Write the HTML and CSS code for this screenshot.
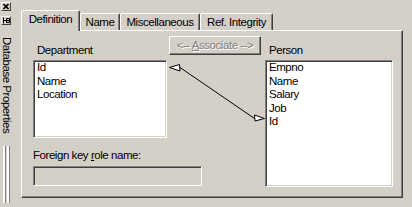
FILE: index.html
```html
<!DOCTYPE html>
<html>
<head>
<meta charset="utf-8">
<link rel="stylesheet" href="styles.css">
</head>
<body>
<div class="app">
  <aside class="side">
    <span class="cap-btn">
      <svg width="8" height="7" viewBox="0 0 8 7"><path d="M1.5 1 L6.5 6 M6.5 1 L1.5 6" stroke="#000" stroke-width="1.7" fill="none"/></svg>
    </span>
    <span class="cap-btn">
      <svg width="8" height="7" viewBox="0 0 8 7"><path d="M1.5 0.5 V6.5 M1.5 3.5 H4 M4.5 1.5 H7.5 V5.5 H4.5 Z M4.5 3.5 H7.5" stroke="#000" stroke-width="1" fill="none"/></svg>
    </span>
    <div class="side-title">Database Properties</div>
    <div class="grip"><span></span><span></span></div>
  </aside>
  <main class="main">
    <div class="tabs">
      <div class="tab active w-def">Definition</div>
      <div class="tab w-name">Name</div>
      <div class="tab w-misc">Miscellaneous</div>
      <div class="tab w-ref">Ref. Integrity</div>
    </div>
    <div class="panel">
      <div class="grid">
        <div class="lbl">Department</div>
        <div class="assoc"><button class="btn" disabled>&lt;-- <u>A</u>ssociate --&gt;</button></div>
        <div class="lbl">Person</div>
        <ul class="list dept-list">
          <li>Id</li>
          <li>Name</li>
          <li>Location</li>
        </ul>
        <ul class="list person-list">
          <li>Empno</li>
          <li>Name</li>
          <li>Salary</li>
          <li>Job</li>
          <li>Id</li>
        </ul>
        <div class="fk">
          <div class="fk-lbl">Foreign key <u>r</u>ole name:</div>
          <div class="field"></div>
        </div>
      </div>
      <svg class="link" width="382" height="168" viewBox="0 0 382 168">
        <line x1="159" y1="37.5" x2="233.5" y2="88.5" stroke="#000" stroke-width="1"/>
        <polygon points="148.5,37.5 158.5,34.5 159,41" fill="#fff" stroke="#000" stroke-width="1"/>
        <polygon points="243.5,88.5 233.5,85 234,91" fill="#fff" stroke="#000" stroke-width="1"/>
      </svg>
    </div>
  </main>
</div>
</body>
</html>
```

FILE: styles.css
```css
* { box-sizing: border-box; }
html, body {
  margin: 0;
  padding: 0;
  background: #d4d0c8;
  font-family: "Liberation Sans", Arial, sans-serif;
  font-size: 11.5px;
  letter-spacing: -0.45px;
  line-height: 13px;
  color: #000;
}
.app {
  display: flex;
  width: 412px;
  height: 207px;
  overflow: hidden;
}
.side {
  width: 21px;
  flex: none;
  display: flex;
  flex-direction: column;
  padding-top: 2px;
}
.cap-btn {
  display: flex;
  align-items: center;
  justify-content: center;
  width: 10px;
  height: 9px;
  margin-left: 1px;
  margin-bottom: 5px;
  border: 1px solid;
  border-color: #fff #404040 #404040 #fff;
}
.cap-btn svg { display: block; }
.side-title {
  writing-mode: vertical-rl;
  width: 13px;
  margin-top: 7px;
  white-space: nowrap;
  height: 100px;
}
.grip {
  display: flex;
  margin-top: 9px;
  margin-left: 3px;
  gap: 1px;
  height: 57px;
}
.grip span {
  width: 3px;
  border-left: 2px solid #fff;
  border-right: 1px solid #808080;
}
.main {
  flex: none;
  width: 382px;
  padding-top: 10px;
}
.tabs {
  display: flex;
  align-items: flex-end;
  height: 21px;
  margin-bottom: -1px;
}
.tab {
  height: 17px;
  margin-bottom: 1px;
  padding-top: 2px;
  text-align: center;
  white-space: nowrap;
  border: 1px solid;
  border-bottom: none;
  border-color: #fff #404040 transparent #fff;
  border-top-left-radius: 2px;
  border-top-right-radius: 2px;
  box-shadow: inset -1px 0 #808080;
  background: #d4d0c8;
}
.tab.active {
  height: 21px;
  margin-bottom: 0;
  position: relative;
  z-index: 1;
}
.w-def { width: 59px; }
.w-name { width: 40px; }
.w-misc { width: 80px; }
.w-ref { width: 73px; }
.panel {
  position: relative;
  width: 382px;
  height: 168px;
  border: 1px solid;
  border-color: #fff #404040 #404040 #fff;
  box-shadow: inset -1px -1px #808080;
}
.grid {
  display: grid;
  grid-template-columns: 134px 98px 128px;
  grid-template-rows: 29px auto auto;
  padding-left: 11px;
}
.lbl {
  align-self: end;
  padding-left: 4px;
  padding-bottom: 3px;
}
.assoc { align-self: start; }
.btn {
  display: block;
  margin: 5px 0 0 2px;
  width: 92px;
  height: 19px;
  padding: 0;
  font: inherit;
  letter-spacing: inherit;
  color: #808080;
  text-shadow: 1px 1px #fff;
  background: #d4d0c8;
  border: 1px solid;
  border-color: #fff #404040 #404040 #fff;
  box-shadow: inset -1px -1px #808080;
}
.btn u { text-decoration-color: #808080; }
.list {
  margin: 0;
  padding: 0 0 0 2px;
  list-style: none;
  background: #fff;
  border: 1px solid;
  border-color: #808080 #fff #fff #808080;
  box-shadow: inset 1px 1px #404040, inset -1px -1px #d4d0c8;
  line-height: 13.5px;
}
.list li { padding-left: 1px; }
.dept-list {
  grid-column: 1;
  grid-row: 2;
  height: 78px;
}
.person-list {
  grid-column: 3;
  grid-row: 2 / span 2;
  height: 127px;
}
.fk {
  grid-column: 1 / span 2;
  grid-row: 3;
  padding-top: 10px;
}
.fk-lbl { margin-bottom: 4px; }
.field {
  width: 169px;
  height: 20px;
  border: 1px solid;
  border-color: #808080 #fff #fff #808080;
  box-shadow: inset 1px 1px #404040, inset -1px -1px #d4d0c8;
}
.link {
  position: absolute;
  left: -1px;
  top: -1px;
  pointer-events: none;
}
```
